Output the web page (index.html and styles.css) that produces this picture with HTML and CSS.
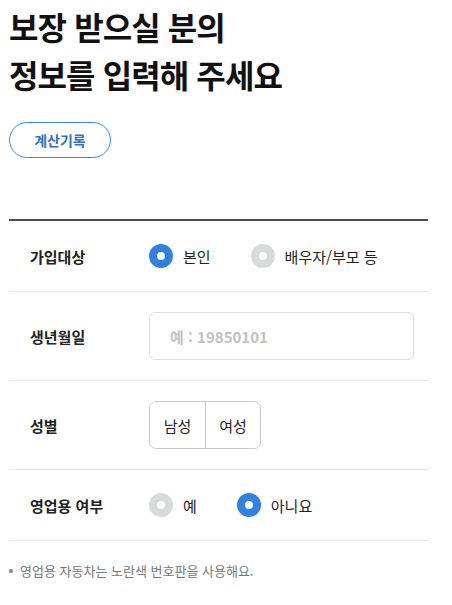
FILE: index.html
```html
<!DOCTYPE html>
<html lang="ko">
<head>
<meta charset="utf-8">
<title>보장 받으실 분의 정보를 입력해 주세요</title>
<link rel="stylesheet" href="styles.css">
</head>
<body>
<div class="page">
  <h1 class="title">보장 받으실 분의<br>정보를 입력해 주세요</h1>
  <button class="history-btn" type="button">계산기록</button>

  <div class="form">
    <div class="row row-short">
      <div class="label">가입대상</div>
      <div class="options">
        <label class="option"><span class="radio on"></span><span class="opt-text">본인</span></label>
        <label class="option"><span class="radio"></span><span class="opt-text">배우자/부모 등</span></label>
      </div>
    </div>
    <div class="row row-tall">
      <div class="label">생년월일</div>
      <input class="text-input" type="text" placeholder="예 : 19850101">
    </div>
    <div class="row row-tall">
      <div class="label">성별</div>
      <div class="segment">
        <button class="seg-btn" type="button">남성</button>
        <button class="seg-btn" type="button">여성</button>
      </div>
    </div>
    <div class="row row-short">
      <div class="label">영업용 여부</div>
      <div class="options">
        <label class="option"><span class="radio"></span><span class="opt-text">예</span></label>
        <label class="option"><span class="radio on"></span><span class="opt-text">아니요</span></label>
      </div>
    </div>
  </div>

  <p class="note"><span class="dot"></span>영업용 자동차는 노란색 번호판을 사용해요.</p>
</div>
</body>
</html>
```

FILE: styles.css
```css
* { box-sizing: border-box; }

html, body {
  margin: 0;
  padding: 0;
  background: #ffffff;
}

body {
  font-family: "Noto Sans CJK KR", "Noto Sans", sans-serif;
  color: #222222;
}

.page {
  padding: 0 24px 0 9px;
}

.title {
  margin: 0;
  padding-top: 2px;
  font-size: 32px;
  line-height: 48px;
  font-weight: 700;
  color: #111111;
  letter-spacing: -0.9px;
}

.history-btn {
  display: block;
  margin-top: 24px;
  width: 102px;
  height: 36px;
  border: 1px solid #3a86e0;
  border-radius: 18px;
  background: #ffffff;
  color: #2c72c9;
  font-family: inherit;
  font-size: 14px;
  font-weight: 700;
  padding: 0;
  cursor: pointer;
}

.form {
  margin-top: 61px;
  border-top: 2px solid #4b4b4b;
}

.row {
  display: flex;
  align-items: center;
  padding-left: 21px;
  border-bottom: 1px solid #e7e7e7;
}

.row-short { height: 71px; }
.row-tall { height: 89px; }

.label {
  width: 119px;
  flex: none;
  font-size: 15px;
  font-weight: 700;
  color: #222222;
}

.options {
  display: flex;
  align-items: center;
  gap: 40px;
}

.option {
  display: flex;
  align-items: center;
  gap: 10px;
}

.radio {
  width: 24px;
  height: 24px;
  border-radius: 50%;
  background: #d9dadc;
  display: flex;
  align-items: center;
  justify-content: center;
  flex: none;
}

.radio::after {
  content: "";
  width: 8px;
  height: 8px;
  border-radius: 50%;
  background: #ffffff;
}

.radio.on { background: #3182e0; }

.opt-text {
  font-size: 15px;
  color: #222222;
}

.text-input {
  width: 265px;
  height: 48px;
  border: 1px solid #dddddd;
  border-radius: 6px;
  padding: 0 0 0 20px;
  font-family: inherit;
  font-size: 15px;
  font-weight: 700;
  color: #222222;
  outline: none;
}

.text-input::placeholder {
  color: #c2c2c2;
}

.segment {
  display: flex;
  height: 48px;
  border: 1px solid #c9c9c9;
  border-radius: 7px;
  overflow: hidden;
}

.seg-btn {
  width: 55px;
  height: 100%;
  border: none;
  background: #ffffff;
  font-family: inherit;
  font-size: 15px;
  color: #222222;
  padding: 0;
}

.seg-btn + .seg-btn {
  border-left: 1px solid #c9c9c9;
}

.note {
  margin: 20px 0 0;
  display: flex;
  align-items: center;
  font-size: 13px;
  line-height: 20px;
  color: #777777;
}

.dot {
  width: 4px;
  height: 4px;
  border-radius: 50%;
  background: #888888;
  margin: 0 7px 0 0;
  flex: none;
}
```
